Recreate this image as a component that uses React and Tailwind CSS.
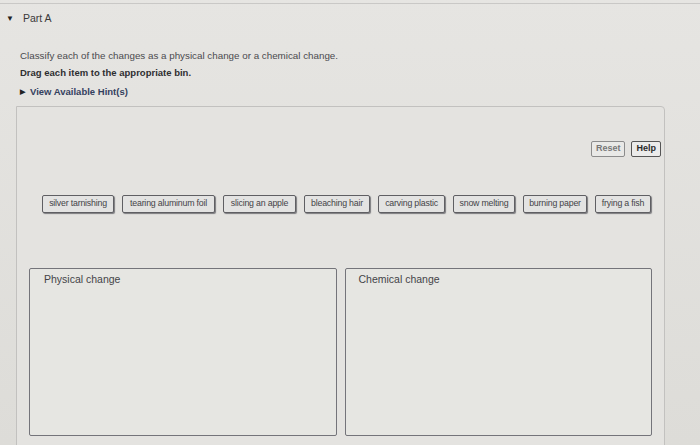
import React from 'react'

const items = [
  ['silver tarnishing', 'w-[72px]'],
  ['tearing aluminum foil', 'w-[93px]'],
  ['slicing an apple', 'w-[73px]'],
  ['bleaching hair', 'w-[66px]'],
  ['carving plastic', 'w-[67px]'],
  ['snow melting', 'w-[62px]'],
  ['burning paper', 'w-[64px]'],
  ['frying a fish', 'w-[56px]'],
]

export default function App() {
  return (
    <div className="h-[445px] w-[700px] overflow-hidden bg-gradient-to-b from-[#e6e5e2] to-[#dddcd8] font-['Liberation_Sans',Arial,sans-serif] text-[#3f3f42]">
      <div className="mt-[3px] border-t border-[#c9c8c6]" />

      <div className="flex items-center pt-[7px] pl-[6px]">
        <span className="w-[17px] text-[8px] text-[#222]">▼</span>
        <span className="text-[10.5px] text-[#3a3a3a]">Part A</span>
      </div>

      <div className="pl-[20px] pt-[23px]">
        <p className="text-[9.8px] leading-[12px] text-[#4a4a4e]">Classify each of the changes as a physical change or a chemical change.</p>
        <p className="mt-[5px] text-[9.5px] font-bold leading-[12px] text-[#2e2e30]">Drag each item to the appropriate bin.</p>
        <div className="mt-[7px] flex items-center gap-[5px] text-[9.5px] font-bold leading-[12px] text-[#34415e]">
          <span className="text-[7px] text-[#222]">▶</span>
          <span>View Available Hint(s)</span>
        </div>
      </div>

      <div className="ml-[16px] mt-[8px] w-[649px] h-[340px] rounded-tr-[4px] border border-[#c2c1bf] bg-[#e4e3e0]">
        <div className="flex justify-end gap-[6px] pt-[34px] pr-[3px]">
          <button className="h-[16px] rounded-[2px] border border-[#8c8c8c] bg-[#e9e9e7] px-[4px] text-[9px] font-bold leading-none text-[#777]">Reset</button>
          <button className="h-[16px] rounded-[2px] border border-[#555] bg-[#ebebea] px-[4px] text-[9px] font-bold leading-none text-[#2a2a2a]">Help</button>
        </div>

        <div className="mt-[38px] flex gap-[8px] pl-[25px]">
          {items.map(([label, w]) => (
            <div
              key={label}
              className={`${w} h-[18px] flex items-center justify-center rounded-[2px] border border-[#5f5f63] bg-[#e3e3e2] shadow-[1px_1px_1px_#7a7a7e] text-[8.8px] leading-none whitespace-nowrap tracking-[-0.2px] text-[#444448]`}
            >
              {label}
            </div>
          ))}
        </div>

        <div className="mt-[55px] grid grid-cols-2 gap-[8px] px-[12px]">
          <div className="h-[168px] rounded-[2px] border border-[#74747a] bg-[#e6e6e2] px-[14px] pt-[3px] text-[10.5px] text-[#444448]">Physical change</div>
          <div className="h-[168px] rounded-[2px] border border-[#74747a] bg-[#e6e6e2] px-[13px] pt-[3px] text-[10.5px] text-[#444448]">Chemical change</div>
        </div>
      </div>
    </div>
  )
}
